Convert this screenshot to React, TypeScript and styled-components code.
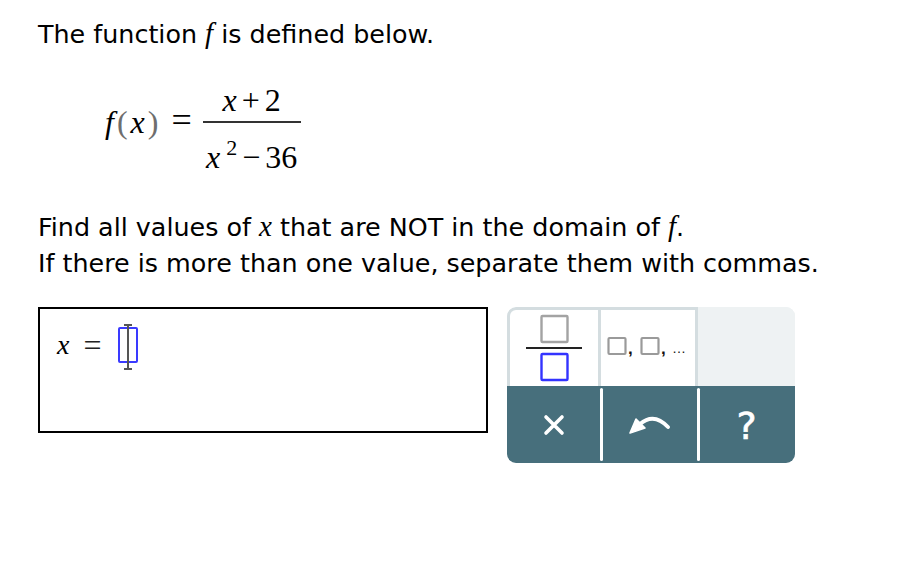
import React from 'react';
import styled, { createGlobalStyle } from 'styled-components';

const GlobalStyle = createGlobalStyle`
  html, body {
    margin: 0;
    padding: 0;
    background: #ffffff;
  }
  body {
    font-family: Verdana, "DejaVu Sans", sans-serif;
    color: #000;
  }
`;

const Page = styled.div`
  width: 898px;
  height: 573px;
  padding: 15px 0 0 38px;
  box-sizing: border-box;
`;

const Text = styled.p<{ $mt?: number }>`
  margin: ${p => p.$mt ?? 0}px 0 0 0;
  font-size: 25.4px;
  line-height: 36px;
  white-space: nowrap;
`;

const MathVar = styled.span`
  font-family: "Liberation Serif", "Times New Roman", serif;
  font-style: italic;
  font-size: 29px;
`;

const Formula = styled.div`
  display: flex;
  align-items: flex-start;
  margin: 31px 0 0 67px;
  font-family: "Liberation Serif", "Times New Roman", serif;
  font-size: 32px;
`;

const Lhs = styled.span`
  display: inline-flex;
  align-items: baseline;
  margin-top: 22px;
  line-height: 34px;
`;

const Paren = styled.span`
  color: #6e6e6e;
  margin: 0 3px;
`;

const Italic = styled.span`
  font-style: italic;
`;

const Equals = styled.span`
  margin: 20px 11px 0 10px;
  font-size: 36px;
  line-height: 34px;
`;

const Fraction = styled.span`
  display: inline-flex;
  flex-direction: column;
  align-items: center;
  min-width: 98px;
`;

const Num = styled.span`
  line-height: 34px;
  padding-bottom: 4px;
`;

const Op = styled.span`
  margin: 0 5px;
`;

const Bar = styled.span`
  align-self: stretch;
  height: 2px;
  background: #333;
`;

const Den = styled.span`
  padding-top: 14px;
  line-height: 40px;
`;

const Sup = styled.span`
  font-size: 22px;
  vertical-align: 13px;
  line-height: 0;
  margin-left: 6px;
`;

const Answer = styled.div`
  display: flex;
  gap: 19px;
  margin-top: 26px;
`;

const InputBox = styled.div`
  width: 450px;
  height: 126px;
  border: 2px solid #000;
  box-sizing: border-box;
  padding: 13px 0 0 17px;
`;

const InputLine = styled.div`
  display: flex;
  align-items: center;
  height: 46px;
  font-family: "Liberation Serif", "Times New Roman", serif;
  font-size: 28px;
`;

const InputEq = styled.span`
  margin: 0 17px 0 14px;
  font-size: 32px;
  color: #222;
`;

const Slot = styled.span`
  position: relative;
  width: 20px;
  height: 36px;
  border: 2px solid #3a3aff;
  border-radius: 2px;
  box-sizing: border-box;
`;

const Caret = styled.span`
  position: absolute;
  left: 7px;
  top: -5px;
  width: 2px;
  height: 46px;
  background: #555;
  &::before, &::after {
    content: '';
    position: absolute;
    left: -3px;
    width: 8px;
    height: 2px;
    background: #555;
  }
  &::before { top: 0; }
  &::after { bottom: 0; }
`;

const Keypad = styled.div`
  width: 288px;
  height: 156px;
  border-radius: 9px;
  overflow: hidden;
  display: flex;
  flex-direction: column;
`;

const TopRow = styled.div`
  display: grid;
  grid-template-columns: 94px 97px 97px;
  height: 79px;
  background: #eef2f3;
`;

const KeyTop = styled.div<{ $first?: boolean }>`
  background: #ffffff;
  border-top: 3px solid #d4dde0;
  border-right: 3px solid #d4dde0;
  border-left: ${p => (p.$first ? '3px solid #d4dde0' : 'none')};
  border-radius: ${p => (p.$first ? '9px 0 0 0' : '0')};
  box-sizing: border-box;
  display: flex;
  align-items: center;
  justify-content: center;
`;

const BlankKey = styled.div`
  background: #eef2f3;
`;

const BottomRow = styled.div`
  display: grid;
  grid-template-columns: 94px 97px 97px;
  flex: 1;
  background: #476f7c;
`;

const KeyBottom = styled.div<{ $sep?: boolean }>`
  position: relative;
  display: flex;
  align-items: center;
  justify-content: center;
  color: #fff;
  ${p =>
    p.$sep
      ? `&::before {
    content: '';
    position: absolute;
    left: -1px;
    top: 2px;
    bottom: 2px;
    width: 3px;
    border-radius: 2px;
    background: #ffffff;
  }`
      : ''}
`;

const Question = styled.span`
  font-family: "DejaVu Sans", Verdana, sans-serif;
  font-size: 38px;
  line-height: 1;
  margin-top: 2px;
  -webkit-text-stroke: 0.6px #fff;
`;

const FracIcon = () => (
  <svg width="58" height="68" viewBox="0 0 58 68">
    <rect x="16.5" y="2" width="26" height="26" fill="none" stroke="#a3a3a3" strokeWidth="2.4" rx="1" />
    <line x1="1" y1="34" x2="57" y2="34" stroke="#222" strokeWidth="2" />
    <rect x="16.5" y="40" width="26" height="26" fill="none" stroke="#3333ff" strokeWidth="2.4" rx="1" />
  </svg>
);

const ListIcon = () => (
  <svg width="82" height="24" viewBox="0 0 82 24">
    <rect x="1.5" y="2" width="17" height="16" fill="none" stroke="#9a9a9a" strokeWidth="2.2" rx="1" />
    <text x="21" y="18" fontFamily="Liberation Sans, sans-serif" fontSize="17" fontWeight="bold" fill="#111">,</text>
    <rect x="34.5" y="2" width="17" height="16" fill="none" stroke="#9a9a9a" strokeWidth="2.2" rx="1" />
    <text x="54" y="18" fontFamily="Liberation Sans, sans-serif" fontSize="17" fontWeight="bold" fill="#111">,</text>
    <text x="65" y="17" fontFamily="Liberation Sans, sans-serif" fontSize="14" fill="#111">…</text>
  </svg>
);

const ClearIcon = () => (
  <svg width="22" height="22" viewBox="0 0 22 22">
    <path d="M3 3 L19 19 M19 3 L3 19" stroke="#fff" strokeWidth="3.6" strokeLinecap="round" />
  </svg>
);

const UndoIcon = () => (
  <svg width="44" height="22" viewBox="0 0 44 22">
    <path d="M12 10 Q26 -2 40 13" fill="none" stroke="#fff" strokeWidth="3.8" strokeLinecap="round" />
    <path d="M2 19 L8 5 L17 14 Z" fill="#fff" stroke="#fff" strokeWidth="1.6" strokeLinejoin="round" />
  </svg>
);

export default function App() {
  return (
    <>
      <GlobalStyle />
      <Page>
        <Text>
          The function <MathVar>f</MathVar> is defined below.
        </Text>
        <Formula>
          <Lhs>
            <Italic>f</Italic>
            <Paren>(</Paren>
            <Italic>x</Italic>
            <Paren>)</Paren>
          </Lhs>
          <Equals>=</Equals>
          <Fraction>
            <Num>
              <Italic>x</Italic>
              <Op>+</Op>2
            </Num>
            <Bar />
            <Den>
              <Italic>x</Italic>
              <Sup>2</Sup>
              <Op>−</Op>36
            </Den>
          </Fraction>
        </Formula>
        <Text $mt={31}>
          Find all values of <MathVar>x</MathVar> that are NOT in the domain of <MathVar>f</MathVar>.
        </Text>
        <Text>If there is more than one value, separate them with commas.</Text>
        <Answer>
          <InputBox>
            <InputLine>
              <Italic>x</Italic>
              <InputEq>=</InputEq>
              <Slot>
                <Caret />
              </Slot>
            </InputLine>
          </InputBox>
          <Keypad>
            <TopRow>
              <KeyTop $first>
                <FracIcon />
              </KeyTop>
              <KeyTop>
                <ListIcon />
              </KeyTop>
              <BlankKey />
            </TopRow>
            <BottomRow>
              <KeyBottom>
                <ClearIcon />
              </KeyBottom>
              <KeyBottom $sep>
                <UndoIcon />
              </KeyBottom>
              <KeyBottom $sep>
                <Question>?</Question>
              </KeyBottom>
            </BottomRow>
          </Keypad>
        </Answer>
      </Page>
    </>
  );
}
